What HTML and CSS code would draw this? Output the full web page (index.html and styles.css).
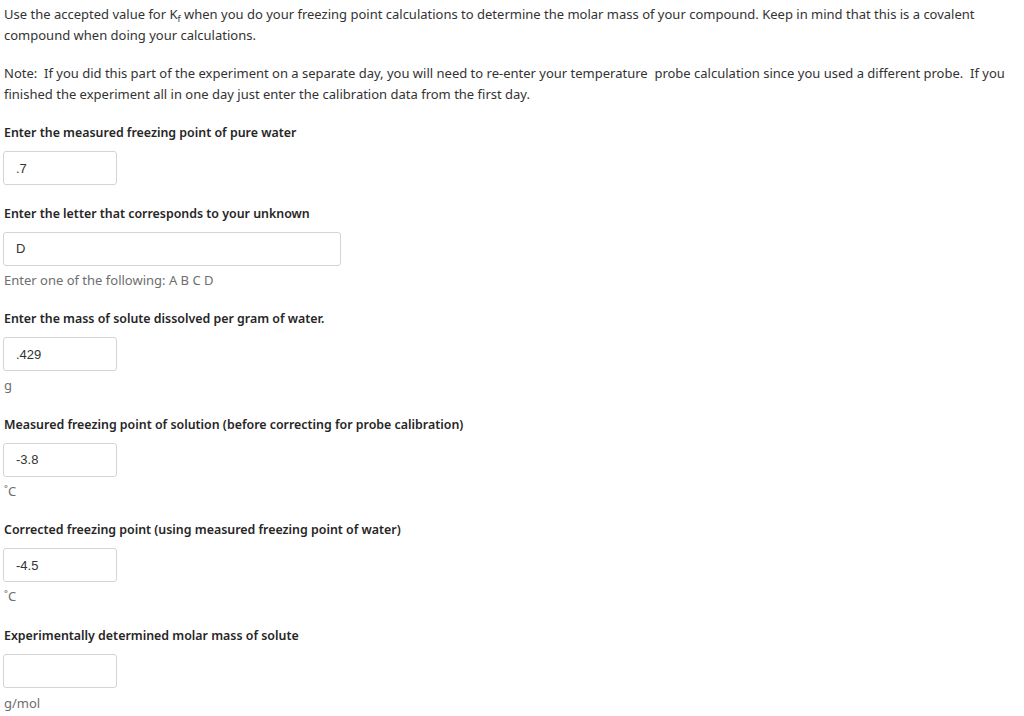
FILE: index.html
```html
<!DOCTYPE html>
<html>
  <head>
    <meta charset="utf-8" />
    <title>Freezing Point Depression</title>
    <link rel="stylesheet" href="styles.css">
  </head>
  <body>
    <div class="question">
      <p class="intro">
        Use the accepted value for K<sub>f</sub> when you do your freezing point calculations to determine the molar mass of your compound. Keep in mind that this is a covalent compound when doing your calculations.
      </p>
      <p class="intro">
        Note:&nbsp; If you did this part of the experiment on a separate day, you will need to re-enter your temperature&nbsp; probe calculation since you used a different probe.&nbsp; If you finished the experiment all in one day just enter the calibration data from the first day.
      </p>

      <div class="field">
        <label class="field-label" for="fp-water">Enter the measured freezing point of pure water</label>
        <input class="answer" id="fp-water" type="text" value=".7">
      </div>

      <div class="field">
        <label class="field-label" for="unknown">Enter the letter that corresponds to your unknown</label>
        <input class="answer answer--wide" id="unknown" type="text" value="D">
        <div class="unit">Enter one of the following: A B C D</div>
      </div>

      <div class="field">
        <label class="field-label" for="mass">Enter the mass of solute dissolved per gram of water.</label>
        <input class="answer" id="mass" type="text" value=".429">
        <div class="unit">g</div>
      </div>

      <div class="field">
        <label class="field-label" for="fp-sol">Measured freezing point of solution (before correcting for probe calibration)</label>
        <input class="answer" id="fp-sol" type="text" value="-3.8">
        <div class="unit">&#730;C</div>
      </div>

      <div class="field">
        <label class="field-label" for="fp-corr">Corrected freezing point (using measured freezing point of water)</label>
        <input class="answer" id="fp-corr" type="text" value="-4.5">
        <div class="unit">&#730;C</div>
      </div>

      <div class="field">
        <label class="field-label" for="molar">Experimentally determined molar mass of solute</label>
        <input class="answer" id="molar" type="text" value="">
        <div class="unit unit--last">g/mol</div>
      </div>
    </div>
  </body>
</html>
```

FILE: styles.css
```css
* {
  font-family: 'Noto Sans', Lato, sans-serif;
}
html,
body {
  margin: 0;
  padding: 0;
  background: #fff;
}
.question {
  width: 1016px;
  padding: 4px 0 0 4px;
  font-size: 13px;
  line-height: 21px;
  color: #333;
}
.intro {
  margin: 0 0 17px 0;
}
.intro sub {
  font-size: 9px;
  line-height: 0;
  vertical-align: -3px;
}
.field {
  margin-bottom: 17.5px;
}
.field-label {
  display: block;
  font-size: 12.4px;
  font-weight: 600;
  color: #262626;
  margin-bottom: 8px;
}
.answer {
  display: block;
  box-sizing: border-box;
  width: 114px;
  height: 34px;
  margin: 0 0 0 -1px;
  padding: 0 12px;
  border: 1px solid #d4d4d4;
  border-radius: 3px;
  font-family: 'Liberation Sans', Arial, sans-serif;
  font-size: 13px;
  color: #333;
}
.answer--wide {
  width: 338px;
}
.unit {
  margin-top: 4px;
  color: #6e6e6e;
}
.unit--last {
  margin-top: 5px;
}
```
